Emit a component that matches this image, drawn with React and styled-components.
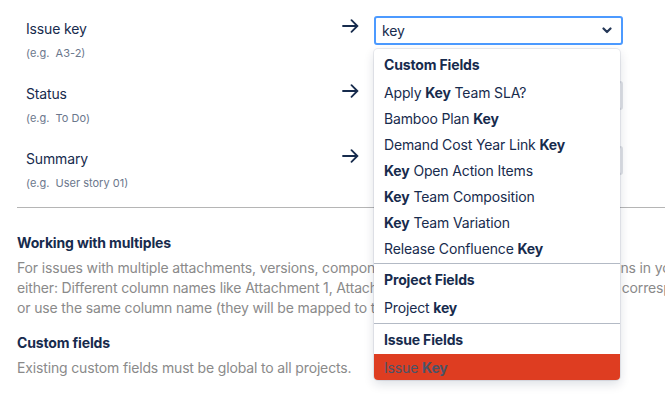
import React from 'react'
import styled, { createGlobalStyle } from 'styled-components'

const GlobalStyle = createGlobalStyle`
    html, body {
        margin: 0;
        padding: 0;
        background: #fff;
    }
    body {
        font-family: Inter, "Noto Sans", "Liberation Sans", sans-serif;
        color: #172b4d;
        letter-spacing: -0.15px;
        -webkit-font-smoothing: antialiased;
    }
`

const fields = [
    { name: 'Issue key', hint: 'A3-2', value: 'key', open: true },
    { name: 'Status', hint: 'To Do' },
    { name: 'Summary', hint: 'User story 01' },
]

const groups = [
    {
        title: 'Custom Fields',
        items: [
            ['Apply ', 'Key', ' Team SLA?'],
            ['Bamboo Plan ', 'Key', ''],
            ['Demand Cost Year Link ', 'Key', ''],
            ['', 'Key', ' Open Action Items'],
            ['', 'Key', ' Team Composition'],
            ['', 'Key', ' Team Variation'],
            ['Release Confluence ', 'Key', ''],
        ],
    },
    {
        title: 'Project Fields',
        items: [['Project ', 'key', '']],
    },
    {
        title: 'Issue Fields',
        items: [['Issue ', 'Key', '']],
        selected: 0,
    },
]

const Arrow = () => (
    <svg width="17" height="14" viewBox="0 0 17 14" fill="none">
        <path d="M1 7h14.5M9.5 1.2l5.8 5.8-5.8 5.8" stroke="#172b4d" strokeWidth="1.8" strokeLinecap="round" strokeLinejoin="round" />
    </svg>
)

const Chevron = () => (
    <svg width="10" height="7" viewBox="0 0 10 7" fill="none">
        <path d="M1.5 1.5L5 5l3.5-3.5" stroke="#253858" strokeWidth="2.2" strokeLinecap="round" strokeLinejoin="round" />
    </svg>
)

const Menu = () => (
    <Dropdown>
        {groups.map((g, gi) => (
            <Group key={g.title} $first={gi === 0}>
                <GroupTitle>{g.title}</GroupTitle>
                {g.items.map(([pre, bold, post], i) => (
                    <Option key={i} $selected={g.selected === i}>
                        {pre}<b>{bold}</b>{post}
                    </Option>
                ))}
            </Group>
        ))}
    </Dropdown>
)

const App = () => {
    return (
        <Page>
            <GlobalStyle />
            <Mapping>
                {fields.map((f) => (
                    <Row key={f.name}>
                        <FieldInfo>
                            <FieldName>{f.name}</FieldName>
                            <Hint>(e.g.&nbsp; {f.hint})</Hint>
                        </FieldInfo>
                        <ArrowCell><Arrow /></ArrowCell>
                        <SelectWrap>
                            <Select $active={f.open}>
                                {f.open && <SelectValue>{f.value}</SelectValue>}
                                {f.open && <Chevron />}
                            </Select>
                            {f.open && <Menu />}
                        </SelectWrap>
                    </Row>
                ))}
            </Mapping>
            <Divider />
            <Notes>
                <Heading>Working with multiples</Heading>
                <Text>
                    <Line>For issues with multiple attachments, versions, components or labels, you can map the columns in your CSV file using</Line>
                    <Line>either: Different column names like Attachment 1, Attachment 2, Attachment 3, mapped to the corresponding field,</Line>
                    <Line>or use the same column name (they will be mapped to the same field).</Line>
                </Text>
                <Heading $spaced>Custom fields</Heading>
                <Text>
                    <Line>Existing custom fields must be global to all projects.</Line>
                </Text>
            </Notes>
        </Page>
    )
}

export default App

const Page = styled.div`
    width: 665px;
    height: 397px;
    overflow: hidden;
    padding-left: 17px;
    box-sizing: border-box;
`
const Mapping = styled.div`
    display: flex;
    flex-direction: column;
    gap: 20px;
    padding: 16px 0 0 9px;
`
const Row = styled.div`
    display: grid;
    grid-template-columns: 316px 32px 249px;
    align-items: start;
    height: 45px;
`
const FieldInfo = styled.div`
    display: flex;
    flex-direction: column;
    padding-top: 3px;
`
const FieldName = styled.div`
    font-size: 14px;
    line-height: 20px;
    color: #172b4d;
`
const Hint = styled.div`
    margin-top: 6px;
    font-size: 11px;
    line-height: 16px;
    color: #6b778c;
    letter-spacing: 0;
`
const ArrowCell = styled.div`
    display: flex;
    padding-top: 3px;
`
const SelectWrap = styled.div`
    position: relative;
`
const Select = styled.div`
    box-sizing: border-box;
    height: 29px;
    display: flex;
    align-items: center;
    justify-content: space-between;
    padding: 0 9px 0 6px;
    border-radius: 3px;
    border: 2px solid ${(p) => (p.$active ? '#4c9aff' : '#dfe1e6')};
    background: ${(p) => (p.$active ? '#fff' : '#f4f5f7')};
`
const SelectValue = styled.span`
    font-size: 14px;
    color: #172b4d;
`
const Dropdown = styled.div`
    position: absolute;
    top: 33px;
    left: 0;
    width: 246px;
    background: #fff;
    border-radius: 4px;
    overflow: hidden;
    z-index: 10;
    box-shadow: 0 0 0 1px rgba(9, 30, 66, 0.08), 0 4px 11px rgba(9, 30, 66, 0.14);
`
const Group = styled.div`
    ${(p) => !p.$first && `
        margin-top: 2px;
        border-top: 1px solid #b3bac5;
        &:not(:last-child) {
            padding-bottom: 1px;
        }
    `}
`
const GroupTitle = styled.div`
    height: 30px;
    display: flex;
    align-items: center;
    padding-left: 10px;
    font-size: 14px;
    font-weight: 700;
    color: #172b4d;
`
const Option = styled.div`
    height: 26px;
    display: flex;
    align-items: center;
    padding-left: 10px;
    font-size: 14px;
    white-space: pre;
    color: ${(p) => (p.$selected ? '#4a5468' : '#172b4d')};
    background: ${(p) => (p.$selected ? '#de3d21' : 'transparent')};

    b {
        font-weight: 700;
    }
`
const Divider = styled.div`
    margin-top: 16px;
    border-top: 1px solid #b5b5b5;
`
const Notes = styled.div`
    padding-top: 25px;
`
const Heading = styled.div`
    font-size: 14px;
    line-height: 20px;
    font-weight: 700;
    color: #172b4d;
    margin-top: ${(p) => (p.$spaced ? '15px' : '0')};
`
const Text = styled.div`
    margin-top: 5px;
    font-size: 14px;
    line-height: 20px;
    color: #8a8a8a;
`
const Line = styled.div`
    white-space: nowrap;
`
